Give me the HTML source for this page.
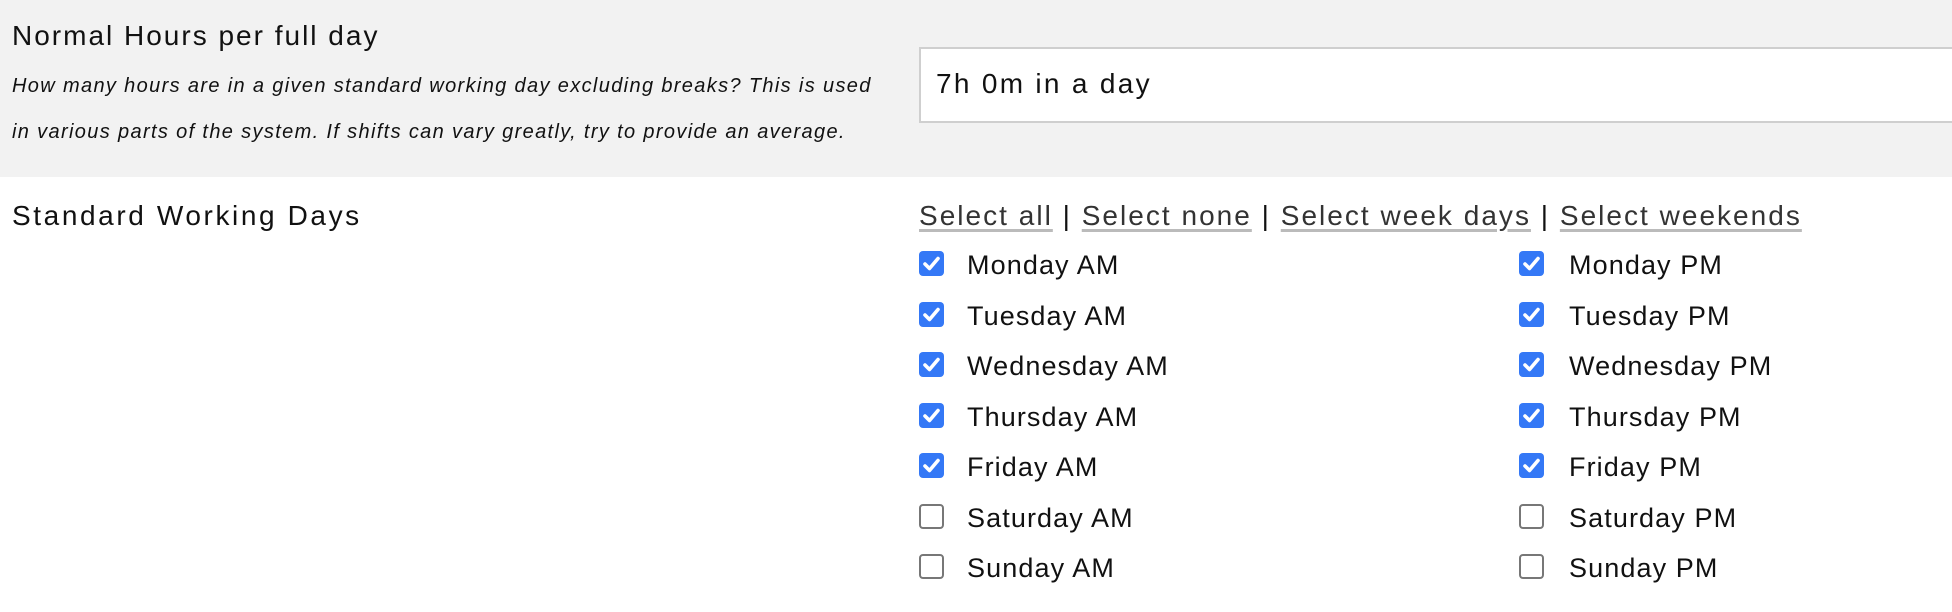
<!DOCTYPE html>
<html><head><meta charset="utf-8"><style>
body{margin:0;width:1952px;height:612px;background:#fff;font-family:"Liberation Sans",sans-serif;color:#111;position:relative;overflow:hidden}
.gray{position:absolute;left:0;top:0;width:1952px;height:177px;background:#f2f2f2}
.t{position:absolute;white-space:nowrap}
.inp{position:absolute;left:919px;top:47px;width:1100px;height:76px;background:#fff;border:2px solid #cfcfcf;box-sizing:border-box}
.cb{position:absolute;width:25px;height:25px;border-radius:4px;box-sizing:border-box}
.on{background:#3478f6}
.off{border:2px solid #777;background:#fff}
.lk{color:#333;text-decoration:underline;text-decoration-color:#bbb;text-decoration-thickness:3px;text-underline-offset:4px}
</style></head><body>
<div class="gray"></div>
<div class="t" style="left:12px;top:20px;font-size:28px;letter-spacing:2px">Normal Hours per full day</div>
<div class="t" style="left:12px;top:75px;font-size:20px;font-style:italic;letter-spacing:1.35px">How many hours are in a given standard working day excluding breaks? This is used</div>
<div class="t" style="left:12px;top:121px;font-size:20px;font-style:italic;letter-spacing:1.35px">in various parts of the system. If shifts can vary greatly, try to provide an average.</div>
<div class="inp"></div>
<div class="t" style="left:936px;top:68px;font-size:28px;letter-spacing:2.3px">7h 0m in a day</div>
<div class="t" style="left:12px;top:200px;font-size:28px;letter-spacing:2.6px">Standard Working Days</div>
<div class="t" style="left:919px;top:200px;font-size:28px;color:#111;letter-spacing:2.02px"><span class="lk">Select all</span> | <span class="lk">Select none</span> | <span class="lk">Select week days</span> | <span class="lk">Select weekends</span></div>
<div id="rows"></div>
<script>
var d=["Monday","Tuesday","Wednesday","Thursday","Friday","Saturday","Sunday"],h="";
for(var i=0;i<7;i++){var y=251+i*50.5,c=i<5?"on":"off";
[["AM",919,967],["PM",1519,1569]].forEach(function(p){
h+='<div class="cb '+c+'" style="left:'+p[1]+'px;top:'+y+'px">'+(i<5?'<svg width="25" height="25" viewBox="0 0 25 25"><path d="M6 13l4.5 4.5L19 7.5" fill="none" stroke="#fff" stroke-width="3.6" stroke-linecap="round" stroke-linejoin="round"/></svg>':'')+'</div>';
h+='<div class="t" style="left:'+p[2]+'px;top:'+(y-1)+'px;font-size:27px;letter-spacing:1.1px">'+d[i]+' '+p[0]+'</div>';});}
document.getElementById("rows").innerHTML=h;
</script>
</body></html>
